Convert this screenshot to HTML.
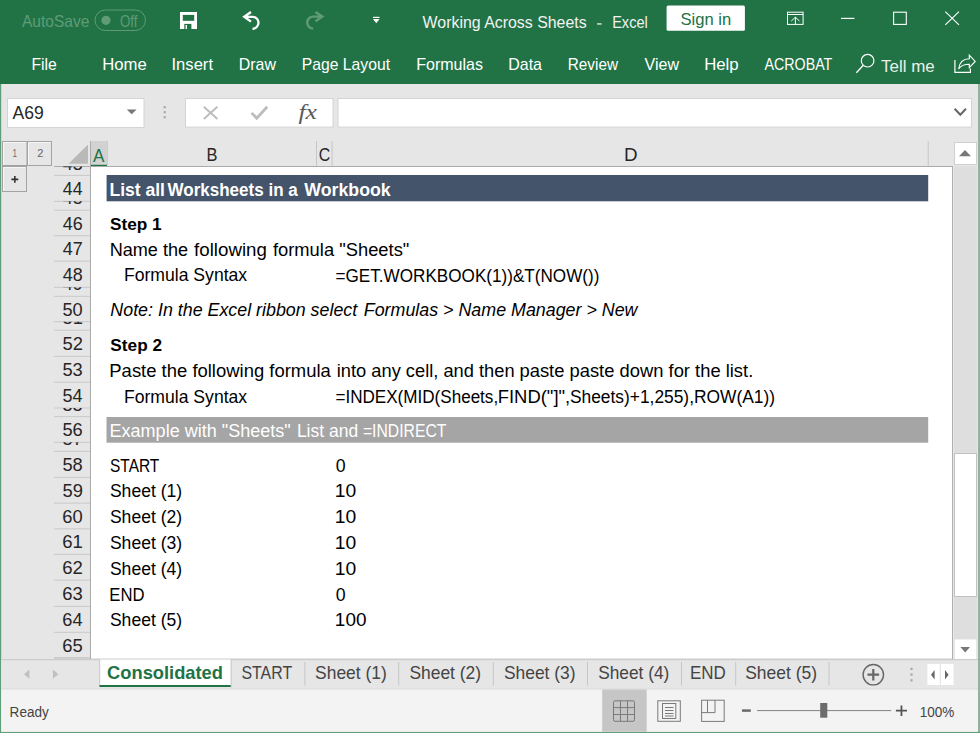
<!DOCTYPE html>
<html><head><meta charset="utf-8"><style>
html,body{margin:0;padding:0;width:980px;height:733px;overflow:hidden;background:#e6e6e6}
svg{display:block;font-family:"Liberation Sans",sans-serif;white-space:pre}
text{white-space:pre}
</style></head><body>
<svg width="980" height="733" viewBox="0 0 980 733" xml:space="preserve">
<rect x="0" y="0" width="980" height="733" fill="#e6e6e6" />
<rect x="0" y="0" width="980" height="84" fill="#217346" />
<text x="22.00" y="27" font-size="16.72" fill="#5f9b77" textLength="67.40" lengthAdjust="spacingAndGlyphs">AutoSave</text>
<rect x="95" y="10" width="50.5" height="20.5" rx="10.25" fill="none" stroke="#5f9b77" stroke-width="1"/>
<circle cx="106" cy="20.3" r="4.6" fill="#5f9b77"/>
<text x="119.90" y="27" font-size="16.72" fill="#5f9b77" textLength="17.54" lengthAdjust="spacingAndGlyphs">Off</text>
<path d="M180 12 H197 V29 H180 Z" fill="#fff"/>
<rect x="182.8" y="14.9" width="11.4" height="5.9" fill="#217346"/>
<rect x="184.3" y="23.9" width="7.1" height="5.1" fill="#217346"/>
<rect x="185.6" y="25" width="1.4" height="4" fill="#fff"/>
<path d="M251 12 L244.2 16.8 L251 21.6 M244.5 16.8 H252.5 A6 6 0 0 1 252.5 28.8" fill="none" stroke="#fff" stroke-width="2.3"/>
<path d="M315.5 12 L322.3 16.6 L315.5 21.2 M322 16.6 H313.2 A6 6 0 0 0 313.2 28.6" fill="none" stroke="#5f9b77" stroke-width="2.4"/>
<rect x="373" y="16.8" width="6.5" height="1.2" fill="#fff" />
<path d="M373 19 H379.5 L376.25 23.2 Z" fill="#fff"/>
<text x="422.60" y="28.2" font-size="16.42" fill="#f2f2f2" textLength="164.05" lengthAdjust="spacingAndGlyphs">Working Across Sheets</text>
<rect x="597.1" y="23.3" width="4.5" height="1.3" fill="#f2f2f2" />
<text x="612.13" y="28.2" font-size="16.42" fill="#f2f2f2" textLength="35.65" lengthAdjust="spacingAndGlyphs">Excel</text>
<rect x="666.6" y="5.6" width="78.3" height="25.2" rx="1.5" fill="#fff"/>
<text x="680.45" y="25" font-size="17.01" fill="#217346" textLength="50.79" lengthAdjust="spacingAndGlyphs">Sign in</text>
<rect x="787.5" y="12.2" width="15.6" height="12.2" fill="none" stroke="#fff" stroke-width="1"/>
<rect x="787.5" y="14" width="15.6" height="1" fill="#fff" />
<path d="M795.4 24.4 V17.2 M791.3 21 L795.4 17.2 L799.5 21" fill="none" stroke="#fff" stroke-width="1"/>
<rect x="841" y="17.8" width="13.4" height="1.2" fill="#fff" />
<rect x="893.6" y="12.2" width="12.7" height="12.2" fill="none" stroke="#fff" stroke-width="1.1"/>
<path d="M945.3 11.6 L959 24.8 M959 11.6 L945.3 24.8" fill="none" stroke="#fff" stroke-width="1.1"/>
<text x="31.44" y="70" font-size="17.01" fill="#ffffff" textLength="25.41" lengthAdjust="spacingAndGlyphs">File</text>
<text x="102.16" y="70" font-size="17.01" fill="#ffffff" textLength="44.55" lengthAdjust="spacingAndGlyphs">Home</text>
<text x="171.51" y="70" font-size="17.01" fill="#ffffff" textLength="41.51" lengthAdjust="spacingAndGlyphs">Insert</text>
<text x="238.72" y="70" font-size="17.01" fill="#ffffff" textLength="37.25" lengthAdjust="spacingAndGlyphs">Draw</text>
<text x="301.74" y="70" font-size="17.01" fill="#ffffff" textLength="88.27" lengthAdjust="spacingAndGlyphs">Page Layout</text>
<text x="416.22" y="70" font-size="17.01" fill="#ffffff" textLength="66.81" lengthAdjust="spacingAndGlyphs">Formulas</text>
<text x="508.22" y="70" font-size="17.01" fill="#ffffff" textLength="33.74" lengthAdjust="spacingAndGlyphs">Data</text>
<text x="567.77" y="70" font-size="17.01" fill="#ffffff" textLength="50.21" lengthAdjust="spacingAndGlyphs">Review</text>
<text x="644.50" y="70" font-size="17.01" fill="#ffffff" textLength="34.49" lengthAdjust="spacingAndGlyphs">View</text>
<text x="704.16" y="70" font-size="17.01" fill="#ffffff" textLength="34.54" lengthAdjust="spacingAndGlyphs">Help</text>
<text x="764.50" y="70" font-size="17.01" fill="#ffffff" textLength="67.78" lengthAdjust="spacingAndGlyphs">ACROBAT</text>
<circle cx="867.6" cy="60.7" r="6.3" fill="none" stroke="#fff" stroke-width="1.2"/>
<path d="M863.3 65.2 L856.4 72.8" stroke="#fff" stroke-width="1.3"/>
<text x="881.06" y="71.7" font-size="17.01" fill="#e8f0ea" textLength="53.66" lengthAdjust="spacingAndGlyphs">Tell me</text>
<path d="M954.9 60 V72.4 H970.4 V68.4" fill="none" stroke="#fff" stroke-width="1.2"/>
<path d="M958.6 69 C959.5 62.5 963 58.8 969.3 58.8 V55.2 L975.2 61.4 L969.3 67.7 V64.3 C964 64.3 960.8 65.8 958.6 69 Z" fill="none" stroke="#fff" stroke-width="1.1"/>
<rect x="0" y="84" width="1.2" height="649" fill="#5f9e78" />
<rect x="978" y="84" width="2" height="649" fill="#93b19f" />
<rect x="0" y="731.8" width="980" height="1.2" fill="#5f9e78" />
<rect x="7.5" y="98.5" width="136.5" height="29" fill="#fff" stroke="#d4d4d4" stroke-width="1"/>
<text x="12.50" y="119.3" font-size="17.88" fill="#262626" textLength="31.18" lengthAdjust="spacingAndGlyphs">A69</text>
<path d="M126.8 109.5 H136.6 L131.7 114.2 Z" fill="#777"/>
<rect x="163.6" y="106.1" width="2.2" height="2.2" fill="#a8a8a8" />
<rect x="163.6" y="111.1" width="2.2" height="2.2" fill="#a8a8a8" />
<rect x="163.6" y="116.1" width="2.2" height="2.2" fill="#a8a8a8" />
<rect x="185.5" y="98.5" width="147.5" height="28.6" fill="#fff" stroke="#d4d4d4" stroke-width="1"/>
<path d="M203.8 106.8 L217.4 119.1 M217.4 106.8 L203.8 119.1" stroke="#bdbdbd" stroke-width="2"/>
<path d="M251.6 112.9 L256.8 118.3 L267.2 106.8" fill="none" stroke="#bdbdbd" stroke-width="2.8"/>
<text x="298.5" y="119.2" font-family="Liberation Serif" font-style="italic" font-size="20" fill="#595959" textLength="18.5" lengthAdjust="spacingAndGlyphs">fx</text>
<rect x="338" y="98.5" width="633.5" height="28.6" fill="#fff" stroke="#d4d4d4" stroke-width="1"/>
<path d="M954.6 108.8 L960.3 114.8 L966 108.8" fill="none" stroke="#666" stroke-width="2"/>
<rect x="2.5" y="141.5" width="24.5" height="24" fill="#e6e6e6" stroke="#a3a3a3" stroke-width="1"/>
<path d="M3.5 164.5 V142.5 H26.0" fill="none" stroke="#f7f7f7" stroke-width="1"/>
<rect x="27.5" y="141.5" width="24" height="24" fill="#e6e6e6" stroke="#a3a3a3" stroke-width="1"/>
<path d="M28.5 164.5 V142.5 H50.5" fill="none" stroke="#f7f7f7" stroke-width="1"/>
<rect x="2.5" y="166.5" width="24" height="25" fill="#e6e6e6" stroke="#a3a3a3" stroke-width="1"/>
<path d="M3.5 190.5 V167.5 H25.5" fill="none" stroke="#f7f7f7" stroke-width="1"/>
<text x="12.60" y="156.9" font-size="11.05" fill="#666" textLength="4.47" lengthAdjust="spacingAndGlyphs">1</text>
<text x="37.15" y="156.9" font-size="11.05" fill="#666" textLength="6.17" lengthAdjust="spacingAndGlyphs">2</text>
<path d="M11.4 179.4 H18.3 M14.85 176.1 V182.7" stroke="#333" stroke-width="1.6"/>
<path d="M68.6 163.8 L88 144.4 V163.8 Z" fill="#b9b9b9"/>
<rect x="90.3" y="141" width="16.7" height="24" fill="#d2d2d2" />
<rect x="90.3" y="164.8" width="16.7" height="2" fill="#217346" />
<rect x="316.0" y="141" width="1" height="25.5" fill="#c6c6c6" />
<rect x="331.6" y="141" width="1" height="25.5" fill="#c6c6c6" />
<rect x="927.7" y="141" width="1" height="25.5" fill="#c6c6c6" />
<rect x="54" y="166" width="899" height="1" fill="#ababab" />
<rect x="107" y="141" width="0.8" height="24" fill="#c6c6c6" />
<text x="93.00" y="161.6" font-size="19.19" fill="#217346" textLength="11.43" lengthAdjust="spacingAndGlyphs">A</text>
<text x="206.58" y="161.3" font-size="18.02" fill="#262626" textLength="10.97" lengthAdjust="spacingAndGlyphs">B</text>
<text x="318.80" y="161.4" font-size="18.31" fill="#262626" textLength="11.49" lengthAdjust="spacingAndGlyphs">C</text>
<text x="623.99" y="161.3" font-size="18.31" fill="#262626" textLength="13.59" lengthAdjust="spacingAndGlyphs">D</text>
<rect x="91" y="167" width="861.6" height="491" fill="#ffffff" />
<rect x="90" y="141" width="1" height="518" fill="#ababab" />
<rect x="952" y="166" width="1" height="494" fill="#b0b0b0" />
<clipPath id="rh"><rect x="54" y="167" width="36" height="491"/></clipPath>
<rect x="54" y="174.9" width="36" height="1" fill="#c9c9c9" />
<svg x="54" y="166.5" width="36" height="8.900000000000006" overflow="hidden">
<text x="8.84" y="3.0" font-size="18.60" fill="#262626" textLength="19.92" lengthAdjust="spacingAndGlyphs">43</text>
</svg>
<rect x="54" y="200.8" width="36" height="1" fill="#c9c9c9" />
<svg x="54" y="175.4" width="36" height="25.900000000000006" overflow="hidden">
<text x="8.85" y="20.0" font-size="18.60" fill="#262626" textLength="19.64" lengthAdjust="spacingAndGlyphs">44</text>
</svg>
<rect x="54" y="209.7" width="36" height="1" fill="#c9c9c9" />
<svg x="54" y="201.3" width="36" height="8.899999999999977" overflow="hidden">
<text x="8.84" y="2.9999999999999716" font-size="18.60" fill="#262626" textLength="19.92" lengthAdjust="spacingAndGlyphs">45</text>
</svg>
<rect x="54" y="235.2" width="36" height="1" fill="#c9c9c9" />
<svg x="54" y="210.2" width="36" height="25.5" overflow="hidden">
<text x="8.84" y="19.599999999999994" font-size="18.60" fill="#262626" textLength="19.92" lengthAdjust="spacingAndGlyphs">46</text>
</svg>
<rect x="54" y="260.6" width="36" height="1" fill="#c9c9c9" />
<svg x="54" y="235.7" width="36" height="25.400000000000034" overflow="hidden">
<text x="8.84" y="19.50000000000003" font-size="18.60" fill="#262626" textLength="20.01" lengthAdjust="spacingAndGlyphs">47</text>
</svg>
<rect x="54" y="286.8" width="36" height="1" fill="#c9c9c9" />
<svg x="54" y="261.1" width="36" height="26.19999999999999" overflow="hidden">
<text x="8.84" y="20.30000000000001" font-size="18.60" fill="#262626" textLength="19.92" lengthAdjust="spacingAndGlyphs">48</text>
</svg>
<rect x="54" y="295.8" width="36" height="1" fill="#c9c9c9" />
<svg x="54" y="287.3" width="36" height="9.0" overflow="hidden">
<text x="8.84" y="3.1000000000000227" font-size="18.60" fill="#262626" textLength="20.01" lengthAdjust="spacingAndGlyphs">49</text>
</svg>
<rect x="54" y="321.2" width="36" height="1" fill="#c9c9c9" />
<svg x="54" y="296.3" width="36" height="25.399999999999977" overflow="hidden">
<text x="8.47" y="19.5" font-size="18.60" fill="#262626" textLength="20.20" lengthAdjust="spacingAndGlyphs">50</text>
</svg>
<rect x="54" y="329.7" width="36" height="1" fill="#c9c9c9" />
<svg x="54" y="321.7" width="36" height="8.5" overflow="hidden">
<text x="8.47" y="2.6000000000000227" font-size="18.60" fill="#262626" textLength="20.40" lengthAdjust="spacingAndGlyphs">51</text>
</svg>
<rect x="54" y="355.9" width="36" height="1" fill="#c9c9c9" />
<svg x="54" y="330.2" width="36" height="26.19999999999999" overflow="hidden">
<text x="8.47" y="20.30000000000001" font-size="18.60" fill="#262626" textLength="20.40" lengthAdjust="spacingAndGlyphs">52</text>
</svg>
<rect x="54" y="381.7" width="36" height="1" fill="#c9c9c9" />
<svg x="54" y="356.4" width="36" height="25.80000000000001" overflow="hidden">
<text x="8.47" y="19.900000000000034" font-size="18.60" fill="#262626" textLength="20.30" lengthAdjust="spacingAndGlyphs">53</text>
</svg>
<rect x="54" y="407.5" width="36" height="1" fill="#c9c9c9" />
<svg x="54" y="382.2" width="36" height="25.80000000000001" overflow="hidden">
<text x="8.48" y="19.900000000000034" font-size="18.60" fill="#262626" textLength="20.01" lengthAdjust="spacingAndGlyphs">54</text>
</svg>
<rect x="54" y="416.1" width="36" height="1" fill="#c9c9c9" />
<svg x="54" y="408" width="36" height="8.600000000000023" overflow="hidden">
<text x="8.47" y="2.7000000000000455" font-size="18.60" fill="#262626" textLength="20.30" lengthAdjust="spacingAndGlyphs">55</text>
</svg>
<rect x="54" y="441.8" width="36" height="1" fill="#c9c9c9" />
<svg x="54" y="416.6" width="36" height="25.69999999999999" overflow="hidden">
<text x="8.47" y="19.80000000000001" font-size="18.60" fill="#262626" textLength="20.30" lengthAdjust="spacingAndGlyphs">56</text>
</svg>
<rect x="54" y="450.8" width="36" height="1" fill="#c9c9c9" />
<svg x="54" y="442.3" width="36" height="9.0" overflow="hidden">
<text x="8.47" y="3.1000000000000227" font-size="18.60" fill="#262626" textLength="20.40" lengthAdjust="spacingAndGlyphs">57</text>
</svg>
<rect x="54" y="476.9" width="36" height="1" fill="#c9c9c9" />
<svg x="54" y="451.3" width="36" height="26.099999999999966" overflow="hidden">
<text x="8.47" y="20.19999999999999" font-size="18.60" fill="#262626" textLength="20.30" lengthAdjust="spacingAndGlyphs">58</text>
</svg>
<rect x="54" y="502.6" width="36" height="1" fill="#c9c9c9" />
<svg x="54" y="477.4" width="36" height="25.700000000000045" overflow="hidden">
<text x="8.47" y="19.800000000000068" font-size="18.60" fill="#262626" textLength="20.40" lengthAdjust="spacingAndGlyphs">59</text>
</svg>
<rect x="54" y="528.3" width="36" height="1" fill="#c9c9c9" />
<svg x="54" y="503.1" width="36" height="25.699999999999932" overflow="hidden">
<text x="8.28" y="19.799999999999955" font-size="18.60" fill="#262626" textLength="20.40" lengthAdjust="spacingAndGlyphs">60</text>
</svg>
<rect x="54" y="553.9" width="36" height="1" fill="#c9c9c9" />
<svg x="54" y="528.8" width="36" height="25.600000000000023" overflow="hidden">
<text x="8.27" y="19.700000000000045" font-size="18.60" fill="#262626" textLength="20.60" lengthAdjust="spacingAndGlyphs">61</text>
</svg>
<rect x="54" y="579.7" width="36" height="1" fill="#c9c9c9" />
<svg x="54" y="554.4" width="36" height="25.800000000000068" overflow="hidden">
<text x="8.27" y="19.90000000000009" font-size="18.60" fill="#262626" textLength="20.60" lengthAdjust="spacingAndGlyphs">62</text>
</svg>
<rect x="54" y="605.9" width="36" height="1" fill="#c9c9c9" />
<svg x="54" y="580.2" width="36" height="26.199999999999932" overflow="hidden">
<text x="8.28" y="20.299999999999955" font-size="18.60" fill="#262626" textLength="20.50" lengthAdjust="spacingAndGlyphs">63</text>
</svg>
<rect x="54" y="631.8" width="36" height="1" fill="#c9c9c9" />
<svg x="54" y="606.4" width="36" height="25.899999999999977" overflow="hidden">
<text x="8.29" y="20.0" font-size="18.60" fill="#262626" textLength="20.20" lengthAdjust="spacingAndGlyphs">64</text>
</svg>
<svg x="54" y="632.3" width="36" height="25.700000000000045" overflow="hidden">
<text x="8.28" y="19.800000000000068" font-size="18.60" fill="#262626" textLength="20.50" lengthAdjust="spacingAndGlyphs">65</text>
</svg>
<rect x="54" y="657.2" width="36" height="1.5" fill="#c6c6c6" />
<rect x="106.6" y="175" width="821.6" height="26.3" fill="#44546a" />
<rect x="106.5" y="417" width="821.7" height="25.7" fill="#a5a5a5" />
<text x="109.56" y="195.5" font-size="18.46" fill="#ffffff" textLength="55.42" lengthAdjust="spacingAndGlyphs" font-weight="bold">List all</text>
<text x="167.50" y="195.5" font-size="18.46" fill="#ffffff" textLength="130.25" lengthAdjust="spacingAndGlyphs" font-weight="bold">Worksheets in a</text>
<text x="304.30" y="195.5" font-size="18.46" fill="#ffffff" textLength="86.42" lengthAdjust="spacingAndGlyphs" font-weight="bold">Workbook</text>
<text x="109.97" y="229.8" font-size="17.15" fill="#000000" textLength="51.68" lengthAdjust="spacingAndGlyphs" font-weight="bold">Step 1</text>
<text x="109.65" y="255.8" font-size="17.44" fill="#000000" textLength="78.48" lengthAdjust="spacingAndGlyphs">Name the</text>
<text x="194.11" y="255.8" font-size="17.44" fill="#000000" textLength="72.73" lengthAdjust="spacingAndGlyphs">following</text>
<text x="272.92" y="255.8" font-size="17.44" fill="#000000" textLength="136.43" lengthAdjust="spacingAndGlyphs">formula &quot;Sheets&quot;</text>
<text x="123.99" y="281.4" font-size="17.44" fill="#000000" textLength="123.14" lengthAdjust="spacingAndGlyphs">Formula Syntax</text>
<text x="335.53" y="281.6" font-size="17.44" fill="#000000" textLength="263.94" lengthAdjust="spacingAndGlyphs">=GET.WORKBOOK(1))&amp;T(NOW())</text>
<text x="110.36" y="316.4" font-size="17.44" fill="#000000" textLength="246.84" lengthAdjust="spacingAndGlyphs" font-style="italic">Note: In the Excel ribbon select</text>
<text x="363.76" y="316.4" font-size="17.44" fill="#000000" textLength="273.76" lengthAdjust="spacingAndGlyphs" font-style="italic">Formulas &gt; Name Manager &gt; New</text>
<text x="110.37" y="351.2" font-size="17.15" fill="#000000" textLength="51.65" lengthAdjust="spacingAndGlyphs" font-weight="bold">Step 2</text>
<text x="109.32" y="377.2" font-size="17.44" fill="#000000" textLength="221.51" lengthAdjust="spacingAndGlyphs">Paste the following formula</text>
<text x="336.81" y="377.2" font-size="17.44" fill="#000000" textLength="177.77" lengthAdjust="spacingAndGlyphs">into any cell, and then</text>
<text x="519.50" y="377.2" font-size="17.44" fill="#000000" textLength="233.75" lengthAdjust="spacingAndGlyphs">paste paste down for the list.</text>
<text x="123.99" y="402.6" font-size="17.44" fill="#000000" textLength="123.14" lengthAdjust="spacingAndGlyphs">Formula Syntax</text>
<text x="335.43" y="402.6" font-size="17.44" fill="#000000" textLength="162.73" lengthAdjust="spacingAndGlyphs">=INDEX(MID(Sheets,</text>
<text x="497.73" y="402.6" font-size="17.44" fill="#000000" textLength="72.47" lengthAdjust="spacingAndGlyphs">FIND(&quot;]&quot;,</text>
<text x="569.92" y="402.6" font-size="17.44" fill="#000000" textLength="205.12" lengthAdjust="spacingAndGlyphs">Sheets)+1,255),ROW(A1))</text>
<text x="109.56" y="436.8" font-size="17.44" fill="#ffffff" textLength="181.13" lengthAdjust="spacingAndGlyphs">Example with &quot;Sheets&quot;</text>
<text x="296.90" y="436.8" font-size="17.44" fill="#ffffff" textLength="61.29" lengthAdjust="spacingAndGlyphs">List and</text>
<text x="362.89" y="436.8" font-size="17.44" fill="#ffffff" textLength="83.54" lengthAdjust="spacingAndGlyphs">=INDIRECT</text>
<text x="110.00" y="471.5" font-size="17.44" fill="#000000" textLength="49.32" lengthAdjust="spacingAndGlyphs">START</text>
<text x="335.68" y="471.5" font-size="17.44" fill="#000000" textLength="9.86" lengthAdjust="spacingAndGlyphs">0</text>
<text x="109.91" y="497.4" font-size="17.44" fill="#000000" textLength="72.22" lengthAdjust="spacingAndGlyphs">Sheet (1)</text>
<text x="334.85" y="497.4" font-size="17.44" fill="#000000" textLength="21.47" lengthAdjust="spacingAndGlyphs">10</text>
<text x="109.91" y="523.3" font-size="17.44" fill="#000000" textLength="72.22" lengthAdjust="spacingAndGlyphs">Sheet (2)</text>
<text x="334.85" y="523.3" font-size="17.44" fill="#000000" textLength="21.47" lengthAdjust="spacingAndGlyphs">10</text>
<text x="109.91" y="549.1" font-size="17.44" fill="#000000" textLength="72.22" lengthAdjust="spacingAndGlyphs">Sheet (3)</text>
<text x="334.85" y="549.1" font-size="17.44" fill="#000000" textLength="21.47" lengthAdjust="spacingAndGlyphs">10</text>
<text x="109.91" y="575" font-size="17.44" fill="#000000" textLength="72.22" lengthAdjust="spacingAndGlyphs">Sheet (4)</text>
<text x="334.85" y="575" font-size="17.44" fill="#000000" textLength="21.47" lengthAdjust="spacingAndGlyphs">10</text>
<text x="109.37" y="600.6" font-size="17.44" fill="#000000" textLength="35.21" lengthAdjust="spacingAndGlyphs">END</text>
<text x="335.68" y="600.6" font-size="17.44" fill="#000000" textLength="9.86" lengthAdjust="spacingAndGlyphs">0</text>
<text x="109.91" y="626.4" font-size="17.44" fill="#000000" textLength="72.22" lengthAdjust="spacingAndGlyphs">Sheet (5)</text>
<text x="334.88" y="626.4" font-size="17.44" fill="#000000" textLength="31.55" lengthAdjust="spacingAndGlyphs">100</text>
<rect x="953" y="141" width="25" height="519" fill="#e6e6e6" />
<rect x="954" y="166.5" width="23" height="473" fill="#dedede" />
<rect x="954.5" y="142.5" width="22" height="22" fill="#fff" stroke="#d0d0d0" stroke-width="1"/>
<path d="M959 156.3 H971 L965 150 Z" fill="#777"/>
<rect x="954.5" y="453.5" width="22" height="143" fill="#fff" stroke="#c2c2c2" stroke-width="1"/>
<rect x="955" y="639.5" width="21" height="20.5" fill="#fff"/>
<path d="M960.4 647 H970 L965.2 652.6 Z" fill="#777"/>
<rect x="1.2" y="659" width="976.8" height="30" fill="#e6e6e6" />
<rect x="1.2" y="659.2" width="976.8" height="1" fill="#c6c6c6" />
<path d="M29.4 669.6 V678.8 L23.9 674.2 Z" fill="#c0c0c0"/>
<path d="M52.9 669.6 V678.8 L58.5 674.2 Z" fill="#c0c0c0"/>
<rect x="99.5" y="659.5" width="131.5" height="27.5" fill="#ffffff" />
<rect x="99.2" y="659.5" width="1" height="27" fill="#c6c6c6" />
<rect x="99.5" y="685" width="131.5" height="2" fill="#217346" />
<rect x="230.6" y="659.5" width="1" height="28" fill="#c6c6c6" />
<text x="107.07" y="678.8" font-size="17.88" fill="#217346" textLength="115.90" lengthAdjust="spacingAndGlyphs" font-weight="bold">Consolidated</text>
<text x="241.48" y="678.8" font-size="17.88" fill="#444444" textLength="50.64" lengthAdjust="spacingAndGlyphs">START</text>
<text x="315.12" y="678.8" font-size="17.88" fill="#444444" textLength="71.60" lengthAdjust="spacingAndGlyphs">Sheet (1)</text>
<text x="409.42" y="678.8" font-size="17.88" fill="#444444" textLength="71.60" lengthAdjust="spacingAndGlyphs">Sheet (2)</text>
<text x="503.92" y="678.8" font-size="17.88" fill="#444444" textLength="71.60" lengthAdjust="spacingAndGlyphs">Sheet (3)</text>
<text x="598.22" y="678.8" font-size="17.88" fill="#444444" textLength="71.09" lengthAdjust="spacingAndGlyphs">Sheet (4)</text>
<text x="689.94" y="678.8" font-size="17.88" fill="#444444" textLength="35.85" lengthAdjust="spacingAndGlyphs">END</text>
<text x="745.21" y="678.8" font-size="17.88" fill="#444444" textLength="71.81" lengthAdjust="spacingAndGlyphs">Sheet (5)</text>
<rect x="304.4" y="662" width="1" height="23.6" fill="#c6c6c6" />
<rect x="398.2" y="662" width="1" height="23.6" fill="#c6c6c6" />
<rect x="492.8" y="662" width="1" height="23.6" fill="#c6c6c6" />
<rect x="587.0" y="662" width="1" height="23.6" fill="#c6c6c6" />
<rect x="681.0" y="662" width="1" height="23.6" fill="#c6c6c6" />
<rect x="735.2" y="662" width="1" height="23.6" fill="#c6c6c6" />
<rect x="828.5" y="662" width="1" height="23.6" fill="#c6c6c6" />
<circle cx="873.3" cy="674.7" r="10.2" fill="none" stroke="#666" stroke-width="1.4"/>
<path d="M867.5 674.7 H879.1 M873.3 668.9 V680.5" stroke="#666" stroke-width="2.2"/>
<rect x="910.4" y="667.8" width="2.2" height="2.2" fill="#a6a6a6" />
<rect x="910.4" y="673.5" width="2.2" height="2.2" fill="#a6a6a6" />
<rect x="910.4" y="679.1999999999999" width="2.2" height="2.2" fill="#a6a6a6" />
<rect x="927.4" y="664" width="26.2" height="21" fill="#fff"/>
<rect x="939.8" y="664" width="1" height="21" fill="#e0e0e0" />
<path d="M934.6 670 V679.5 L931 674.7 Z" fill="#666"/>
<path d="M945 670 V679.5 L948.6 674.7 Z" fill="#666"/>
<rect x="1.2" y="689" width="976.8" height="42.8" fill="#f3f3f3" />
<rect x="1.2" y="688.5" width="976.8" height="1" fill="#dadada" />
<text x="9.62" y="716.6" font-size="14.83" fill="#444444" textLength="39.19" lengthAdjust="spacingAndGlyphs">Ready</text>
<rect x="602.2" y="689.5" width="44.5" height="42.3" fill="#c6c6c6" />
<rect x="613.5" y="700.8" width="21" height="20.5" rx="1.5" fill="none" stroke="#7a7a7a" stroke-width="1"/>
<path d="M620.5 700.8 V721.3 M627.5 700.8 V721.3 M613.5 707.6 H634.5 M613.5 714.5 H634.5" stroke="#7a7a7a" stroke-width="1"/>
<rect x="657.8" y="700.8" width="22.5" height="20.5" fill="none" stroke="#7a7a7a" stroke-width="1"/>
<rect x="662.5" y="703.5" width="13.3" height="15" fill="none" stroke="#7a7a7a" stroke-width="1"/>
<path d="M665 707.5 H673.5 M665 710.5 H673.5 M665 713.5 H673.5 M665 716 H673.5" stroke="#7a7a7a" stroke-width="1"/>
<rect x="701.6" y="700.2" width="22.6" height="21.2" fill="none" stroke="#7a7a7a" stroke-width="1"/>
<path d="M701.6 712.6 H715 V700.2 M707.5 700.2 V712.6" fill="none" stroke="#7a7a7a" stroke-width="1"/>
<rect x="742" y="709.4" width="8.8" height="2.4" fill="#666" />
<rect x="757" y="710" width="134.2" height="1.1" fill="#8c8c8c" />
<rect x="820.2" y="703" width="7.1" height="14.7" fill="#6c6c6c" />
<path d="M895.9 710.7 H907 M901.45 705.4 V716" stroke="#555" stroke-width="1.8"/>
<text x="919.79" y="717" font-size="15.41" fill="#444444" textLength="34.55" lengthAdjust="spacingAndGlyphs">100%</text>
</svg>
</body></html>
